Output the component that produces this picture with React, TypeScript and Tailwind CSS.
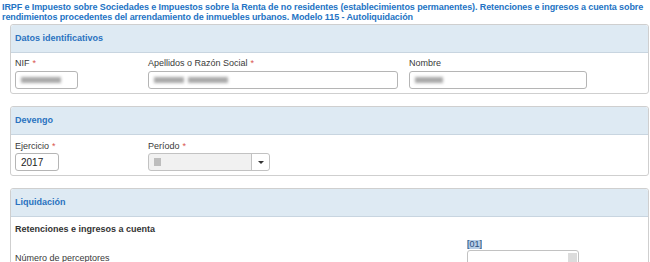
import React from "react";

const Req = () => <span className="text-[#d9534f] ml-[3px]">*</span>;

const Blur = ({ w, dark = false }: { w: number; dark?: boolean }) => (
  <div
    className={`h-[6px] blur-[1.5px] ${dark ? "bg-[#8a8a8a]" : "bg-[#a9a9a9]"}`}
    style={{ width: w }}
  />
);

const Panel = ({ title, children }: { title: string; children: React.ReactNode }) => (
  <div className="border border-[#cfcfcf] rounded-[3px] bg-white">
    <div className="h-[28px] bg-[#deeaf3] border-b border-[#c8d5e0] flex items-center px-[4px] rounded-t-[3px]">
      <span className="text-[9px] font-bold text-[#2a72c0]">{title}</span>
    </div>
    {children}
  </div>
);

const Field = ({ w, children }: { w: number; children?: React.ReactNode }) => (
  <div
    className="h-[18px] border border-[#b5b5b5] rounded-[3px] bg-white flex items-center px-[5px]"
    style={{ width: w }}
  >
    {children}
  </div>
);

export default function App() {
  return (
    <div
      className="w-[650px] h-[262px] overflow-hidden bg-white text-[#3a3a3a]"
      style={{ fontFamily: '"Liberation Sans", Arial, sans-serif' }}
    >
      <div className="px-[2px] pt-[2px] text-[9px] leading-[10px] font-bold text-[#2373c4] tracking-[-0.1px]">
        IRPF e Impuesto sobre Sociedades e Impuestos sobre la Renta de no residentes (establecimientos permanentes). Retenciones e ingresos a cuenta sobre rendimientos procedentes del arrendamiento de inmuebles urbanos. Modelo 115 - Autoliquidación
      </div>

      <div className="ml-[10px] w-[639px] mt-[2px] flex flex-col gap-[12px] text-[9px]">
        <Panel title="Datos identificativos">
          <div className="flex px-[4px] pt-[4px] pb-[4px]">
            <div className="w-[133px] flex flex-col gap-[2px]">
              <div className="h-[12px] leading-[12px]">NIF<Req /></div>
              <Field w={63}>
                <Blur w={40} />
              </Field>
            </div>
            <div className="w-[261px] flex flex-col gap-[2px]">
              <div className="h-[12px] leading-[12px]">Apellidos o Razón Social<Req /></div>
              <Field w={250}>
                <div className="flex gap-[4px]">
                  <Blur w={30} />
                  <Blur w={40} />
                </div>
              </Field>
            </div>
            <div className="flex flex-col gap-[2px]">
              <div className="h-[12px] leading-[12px]">Nombre</div>
              <Field w={178}>
                <Blur w={28} />
              </Field>
            </div>
          </div>
        </Panel>

        <Panel title="Devengo">
          <div className="flex px-[4px] pt-[5px] pb-[4px]">
            <div className="w-[133px] flex flex-col gap-[1px]">
              <div className="h-[12px] leading-[12px]">Ejercicio<Req /></div>
              <Field w={44}>
                <span className="text-[10px] text-[#222]">2017</span>
              </Field>
            </div>
            <div className="flex flex-col gap-[1px]">
              <div className="h-[12px] leading-[12px]">Período<Req /></div>
              <div className="w-[122px] h-[18px] border border-[#c2c2c2] rounded-[3px] bg-[#f1f1f1] flex">
                <div className="flex-1 flex items-center px-[5px]">
                  <div className="w-[7px] h-[8px] bg-[#bdbdbd] blur-[0.6px]" />
                </div>
                <div className="w-[18px] border-l border-[#c2c2c2] bg-white rounded-r-[3px] flex items-center justify-center">
                  <div className="w-0 h-0 border-l-[3px] border-r-[3px] border-t-[3px] border-l-transparent border-r-transparent border-t-[#333]" />
                </div>
              </div>
            </div>
          </div>
        </Panel>

        <Panel title="Liquidación">
          <div className="px-[4px] pt-[6px]">
            <div className="font-bold text-[#333] h-[12px] leading-[12px]">Retenciones e ingresos a cuenta</div>
            <div className="flex mt-[5px]">
              <div className="w-[452px] pt-[12px] leading-[12px]">Número de perceptores</div>
              <div className="flex flex-col">
                <span className="self-start bg-[#b7cde6] text-[#2b4f80] leading-[9px] text-[9px]">[01]</span>
                <div className="mt-[1px] w-[112px] h-[18px] border border-[#c2c2c2] rounded-t-[3px] bg-white flex justify-end pr-[1px] pt-[2px]">
                  <div className="w-[9px] h-[14px] bg-[#dcdcdc]" />
                </div>
              </div>
            </div>
          </div>
        </Panel>
      </div>
    </div>
  );
}
